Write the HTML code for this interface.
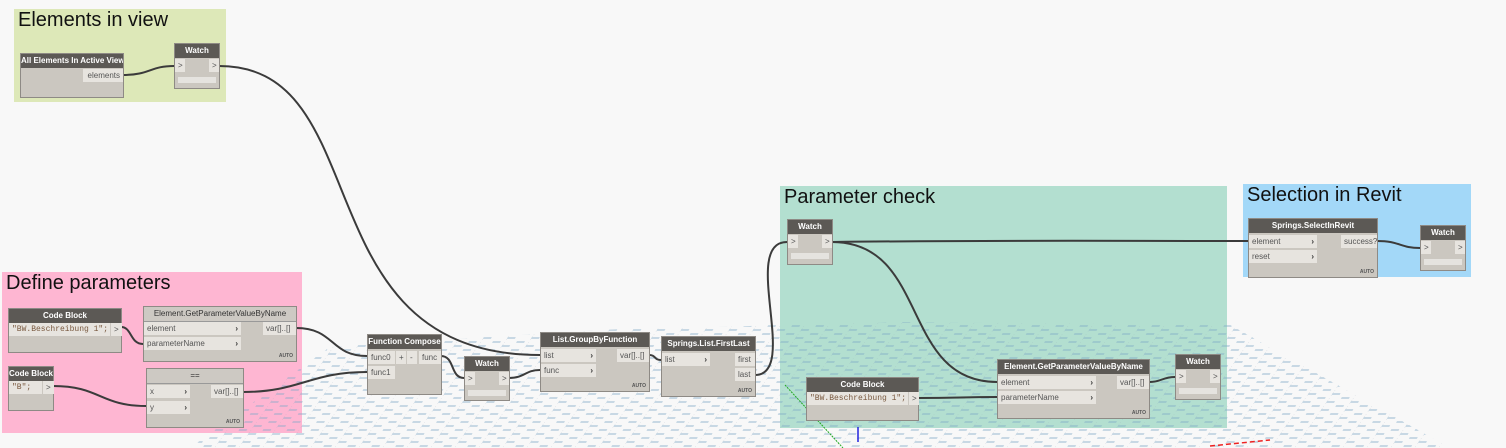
<!DOCTYPE html>
<html><head><meta charset="utf-8"><style>
body{margin:0;width:1506px;height:448px;overflow:hidden;background:#f8f8f8;font-family:"Liberation Sans",sans-serif;position:relative}
.g{position:absolute}
.g span{position:absolute;left:4px;top:0;font-size:20px;color:#111}
.n{position:absolute;background:#cbc7c0;border:1px solid #8e8a85;box-sizing:border-box}
.h{background:#5c5955;color:#fff;font-size:8px;font-weight:bold;text-align:center;height:14px;line-height:14px;white-space:nowrap;overflow:hidden}
.hl{background:#cdc9c3;color:#333;font-weight:normal;border-bottom:1px solid #999}
.p{position:absolute;background:#e7e4df;font-size:8px;color:#555;height:13px;line-height:13px;padding-left:3px;box-sizing:border-box}
.ar{position:absolute;right:3px;top:0;font-weight:bold;color:#333}
.auto{position:absolute;right:3px;bottom:2px;font-size:5px;font-weight:bold;color:#555}
.code{font-family:"Liberation Mono",monospace;color:#7a5a40;font-size:8px}
.bar{position:absolute;left:6px;right:6px;background:#e5e3df;height:6px}
</style></head><body>
<div class="g" style="left:14px;top:9px;width:212px;height:93px;background:#dde8b8"><span>Elements in view</span></div>
<div class="g" style="left:2px;top:272px;width:300px;height:161px;background:#feb6d2"><span>Define parameters</span></div>
<div class="g" style="left:780px;top:186px;width:447px;height:242px;background:#b3dfd0"><span>Parameter check</span></div>
<div class="g" style="left:1243px;top:184px;width:228px;height:93px;background:#a3d8f8"><span>Selection in Revit</span></div>

<svg width="1506" height="448" style="position:absolute;left:0;top:0">
<defs><pattern id="hp" width="24" height="8" patternUnits="userSpaceOnUse" patternTransform="skewX(-35)">
<line x1="0" y1="2" x2="8" y2="2" stroke="#7fa8c6" stroke-width="1"/>
<line x1="12" y1="6" x2="20" y2="6" stroke="#7fa8c6" stroke-width="1"/>
<line x1="0" y1="0" x2="0" y2="8" stroke="#9ab" stroke-width="0.5" stroke-dasharray="1,2"/></pattern></defs>
<polygon points="190,448 330,347 600,330 900,322 1230,325 1450,448" fill="url(#hp)" opacity="0.75"/>
<line x1="785" y1="385" x2="843" y2="448" stroke="#2a2" stroke-width="1" stroke-dasharray="2,1"/>
<line x1="858" y1="427" x2="858" y2="442" stroke="#22d" stroke-width="1.5"/>
<line x1="1210" y1="446" x2="1270" y2="440" stroke="#e22" stroke-width="1.5" stroke-dasharray="5,3"/>
<g fill="none" stroke="#3b3b3b" stroke-width="2">
<path d="M123,75 C150,75 150,66 174,66"/>
<path d="M219,66 C380,66 300,355 540,355"/>
<path d="M121,327 C132,327 130,344 143,344"/>
<path d="M296,328 C335,328 330,356 367,356"/>
<path d="M243,392 C300,392 310,372 367,372"/>
<path d="M53,386 C100,386 100,406 146,406"/>
<path d="M441,356 C455,356 450,378 464,378"/>
<path d="M509,378 C525,378 525,370 540,370"/>
<path d="M649,355 C656,355 654,360 661,360"/>
<path d="M755,375 C800,375 740,242 787,242"/>
<path d="M832,242 C1000,240 1100,241 1248,241"/>
<path d="M832,242 C930,242 900,382 997,382"/>
<path d="M918,398 C960,398 960,397 997,397"/>
<path d="M1149,382 C1162,382 1162,377 1175,377"/>
<path d="M1377,241 C1400,241 1400,248 1420,248"/>
</g></svg>

<div class="n" style="left:20px;top:53px;width:104px;height:45px"><div class="h">All Elements In Active View</div><div class="p" style="right:0;top:15px;width:40px;text-align:right;padding-right:3px">elements</div></div>
<div class="n" style="left:174px;top:43px;width:46px;height:46px"><div class="h">Watch</div><div class="p" style="left:0;top:15px;width:10px">&gt;</div><div class="p" style="right:0;top:15px;width:10px">&gt;</div><div class="bar" style="top:33px;left:3px;right:3px"></div></div>

<div class="n" style="left:8px;top:308px;width:114px;height:45px"><div class="h">Code Block</div><div class="p code" style="left:0;top:14px;width:101px">"BW.Beschreibung 1";</div><div class="p" style="left:102px;top:14px;width:11px">&gt;</div></div>
<div class="n" style="left:143px;top:306px;width:154px;height:56px"><div class="h hl">Element.GetParameterValueByName</div><div class="p" style="left:0;top:15px;width:97px">element<b class="ar">›</b></div><div class="p" style="left:0;top:30px;width:97px">parameterName<b class="ar">›</b></div><div class="p" style="right:0;top:15px;width:33px">var[]..[]</div><div class="auto">AUTO</div></div>
<div class="n" style="left:8px;top:366px;width:46px;height:45px"><div class="h">Code Block</div><div class="p code" style="left:0;top:14px;width:33px">"B";</div><div class="p" style="left:34px;top:14px;width:11px">&gt;</div></div>
<div class="n" style="left:146px;top:368px;width:98px;height:60px"><div class="h hl">==</div><div class="p" style="left:0;top:16px;width:43px">x<b class="ar">›</b></div><div class="p" style="left:0;top:32px;width:43px">y<b class="ar">›</b></div><div class="p" style="right:0;top:16px;width:32px">var[]..[]</div><div class="auto">AUTO</div></div>

<div class="n" style="left:367px;top:334px;width:75px;height:61px"><div class="h">Function Compose</div><div class="p" style="left:0;top:16px;width:27px">func0</div><div class="p" style="left:28px;top:16px;width:10px">+</div><div class="p" style="left:39px;top:16px;width:10px">-</div><div class="p" style="right:0;top:16px;width:22px">func</div><div class="p" style="left:0;top:31px;width:27px">func1</div></div>
<div class="n" style="left:464px;top:356px;width:46px;height:45px"><div class="h">Watch</div><div class="p" style="left:0;top:15px;width:10px">&gt;</div><div class="p" style="right:0;top:15px;width:10px">&gt;</div><div class="bar" style="top:33px;left:3px;right:3px"></div></div>
<div class="n" style="left:540px;top:332px;width:110px;height:60px"><div class="h">List.GroupByFunction</div><div class="p" style="left:0;top:16px;width:55px">list<b class="ar">›</b></div><div class="p" style="left:0;top:31px;width:55px">func<b class="ar">›</b></div><div class="p" style="right:0;top:16px;width:32px">var[]..[]</div><div class="auto">AUTO</div></div>
<div class="n" style="left:661px;top:336px;width:95px;height:61px"><div class="h">Springs.List.FirstLast</div><div class="p" style="left:0;top:16px;width:48px">list<b class="ar">›</b></div><div class="p" style="right:0;top:16px;width:20px">first</div><div class="p" style="right:0;top:31px;width:20px">last</div><div class="auto">AUTO</div></div>

<div class="n" style="left:787px;top:219px;width:46px;height:46px"><div class="h">Watch</div><div class="p" style="left:0;top:15px;width:10px">&gt;</div><div class="p" style="right:0;top:15px;width:10px">&gt;</div><div class="bar" style="top:33px;left:3px;right:3px"></div></div>
<div class="n" style="left:806px;top:377px;width:113px;height:44px"><div class="h">Code Block</div><div class="p code" style="left:0;top:14px;width:101px">"BW.Beschreibung 1";</div><div class="p" style="left:102px;top:14px;width:10px">&gt;</div></div>
<div class="n" style="left:997px;top:359px;width:153px;height:60px"><div class="h">Element.GetParameterValueByName</div><div class="p" style="left:0;top:16px;width:98px">element<b class="ar">›</b></div><div class="p" style="left:0;top:31px;width:98px">parameterName<b class="ar">›</b></div><div class="p" style="right:0;top:16px;width:32px">var[]..[]</div><div class="auto">AUTO</div></div>
<div class="n" style="left:1175px;top:354px;width:46px;height:46px"><div class="h">Watch</div><div class="p" style="left:0;top:15px;width:10px">&gt;</div><div class="p" style="right:0;top:15px;width:10px">&gt;</div><div class="bar" style="top:33px;left:3px;right:3px"></div></div>

<div class="n" style="left:1248px;top:218px;width:130px;height:60px"><div class="h">Springs.SelectInRevit</div><div class="p" style="left:0;top:16px;width:68px">element<b class="ar">›</b></div><div class="p" style="left:0;top:31px;width:68px">reset<b class="ar">›</b></div><div class="p" style="right:0;top:16px;width:36px">success?</div><div class="auto">AUTO</div></div>
<div class="n" style="left:1420px;top:225px;width:46px;height:46px"><div class="h">Watch</div><div class="p" style="left:0;top:15px;width:10px">&gt;</div><div class="p" style="right:0;top:15px;width:10px">&gt;</div><div class="bar" style="top:33px;left:3px;right:3px"></div></div>
</body></html>
